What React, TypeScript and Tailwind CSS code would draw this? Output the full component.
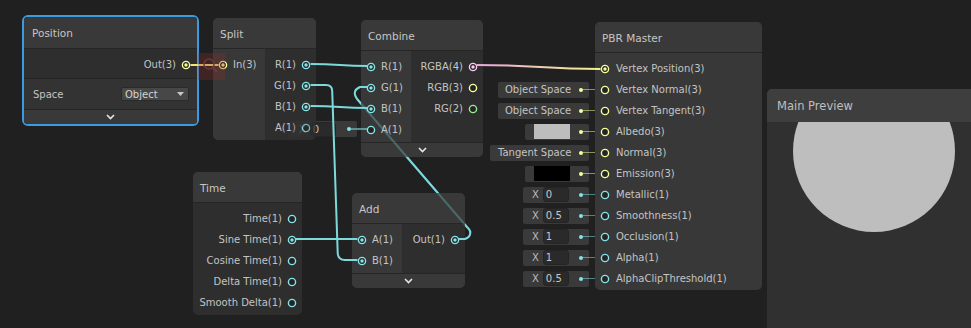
import React from "react";

const CY = "#84E4E7";
const YL = "#F6FF9A";
const PK = "#FBCBF4";
const GR = "#9AEF92";
const WIRE = "#7cdadd";

function Port({ color, on = false }: { color: string; on?: boolean }) {
  return (
    <svg width="10" height="10" viewBox="0 0 10 10" className="block shrink-0">
      <circle cx="5" cy="5" r="3.6" fill="#242424" stroke={color} strokeWidth="1.4" />
      {on && <circle cx="5" cy="5" r="1.7" fill={color} />}
    </svg>
  );
}

function InRow({ label, color, on, gap = "gap-[5px]" }: { label: string; color: string; on?: boolean; gap?: string }) {
  return (
    <div className={`flex h-[21px] items-center whitespace-nowrap pl-[5px] ${gap}`}>
      <Port color={color} on={on} />
      <span>{label}</span>
    </div>
  );
}

function OutRow({ label, color, on }: { label: string; color: string; on?: boolean }) {
  return (
    <div className="flex h-[21px] items-center justify-end gap-[5px] whitespace-nowrap pr-[5px]">
      <span>{label}</span>
      <Port color={color} on={on} />
    </div>
  );
}

function Chevron() {
  return (
    <div className="flex h-[15px] shrink-0 items-center justify-center border-t border-[#262626] bg-[#393939]">
      <svg width="9" height="6" viewBox="0 0 9 6">
        <polyline points="1,1 4.5,4.5 8,1" fill="none" stroke="#e6e6e6" strokeWidth="1.6" />
      </svg>
    </div>
  );
}

function Title({ children, pl = "px-[7px]", h = "h-[31px]" }: { children: React.ReactNode; pl?: string; h?: string }) {
  return (
    <div className={`flex shrink-0 items-center border-b border-[#262626] bg-[#393939] pt-[3px] text-[10.5px] text-[#c6c6c6] ${h} ${pl}`}>
      {children}
    </div>
  );
}

function Box({
  w,
  pl,
  dot,
  line,
  children,
}: {
  w: string;
  pl: string;
  dot: string;
  line: string;
  children: React.ReactNode;
}) {
  return (
    <div className="flex h-[21px] items-center justify-end">
      <div className={`flex h-[16px] items-center rounded-[2px] bg-[#3a3a3a] ${w} ${pl}`}>
        {children}
        <div className={`ml-auto size-[4px] shrink-0 rounded-full ${dot}`} />
        <div className={`h-[1.5px] w-[6px] shrink-0 ${line}`} />
      </div>
      <div className={`h-[1.5px] w-[11px] shrink-0 ${line}`} />
    </div>
  );
}

function XField({ v }: { v: string }) {
  return (
    <>
      <span className="text-[#bdbdbd]">X</span>
      <div className="ml-[4px] flex h-[15px] w-[26px] shrink-0 items-center rounded-[3px] border border-[#242424] bg-[#2a2a2a] pl-[2px] text-[#c8c8c8]">
        {v}
      </div>
    </>
  );
}

function InlineA({ faint = false }: { faint?: boolean }) {
  return (
    <div className={`absolute left-[290px] top-[121px] flex items-center ${faint ? "opacity-25" : ""}`}>
      <div className="flex h-[16px] w-[67px] items-center rounded-[2px] bg-[#3a3a3a] pl-[9px]">
        <span className="text-[#bdbdbd]">X</span>
        <div className="ml-[4px] flex h-[15px] w-[26px] shrink-0 items-center rounded-[3px] border border-[#242424] bg-[#2a2a2a] pl-[2px] text-[#c8c8c8]">
          0
        </div>
        <div className="ml-auto size-[4px] shrink-0 rounded-full bg-[#84E4E7]" />
        <div className="h-[1.5px] w-[6px] shrink-0 bg-[#84E4E7]/50" />
      </div>
      <div className="h-[1.5px] w-[10px] shrink-0 bg-[#84E4E7]/50" />
    </div>
  );
}

export default function App() {
  return (
    <div className="relative h-[328px] w-[971px] overflow-hidden bg-[#202020] font-['DejaVu_Sans','Liberation_Sans',sans-serif] text-[10px] text-[#c4c4c4]">
      {/* wire under nodes: diagonal part */}
      <svg className="absolute left-0 top-0" width="971" height="328">
        <path
          d="M458.5 239 L463 239 C470 239 473 232 467 227 L357.5 99.5 Q351 91 360 87 L367.5 87"
          fill="none"
          stroke={WIRE}
          strokeWidth="2"
        />
      </svg>

      {/* Position node */}
      <div className="absolute left-[22px] top-[15px] h-[111px] w-[177px] rounded-[6px] border-2 border-[#3a9be0]">
        <div className="flex h-full w-full flex-col overflow-hidden rounded-[4px] bg-[#2e2e2e]">
          <Title pl="px-[8px]" h="h-[32px]">
            Position
          </Title>
          <div className="flex h-[30px] shrink-0 flex-col border-b border-[#262626] bg-[#2e2e2e] pt-[5px]">
            <div className="flex h-[21px] items-center justify-end gap-[5px] pr-[6px]">
              <span>Out(3)</span>
              <Port color={YL} on />
            </div>
          </div>
          <div className="flex h-[30px] shrink-0 items-center justify-between bg-[#333333] pl-[9px] pr-[8px]">
            <span>Space</span>
            <div className="flex h-[14px] w-[68px] items-center justify-between rounded-[2px] border border-[#2a2a2a] bg-[#474747] pl-[3px] pr-[4px] text-[#d4d4d4]">
              <span>Object</span>
              <svg width="7" height="4" viewBox="0 0 7 4">
                <polygon points="0,0 7,0 3.5,4" fill="#c8c8c8" />
              </svg>
            </div>
          </div>
          <Chevron />
        </div>
      </div>

      {/* Combine node */}
      <div className="absolute left-[361px] top-[20px] flex w-[122px] flex-col overflow-hidden rounded-[5px] bg-[#2e2e2e]">
        <Title>Combine</Title>
        <div className="flex">
          <div className="w-[50px] shrink-0 bg-[#383838] pb-[2px] pt-[5px]">
            <InRow label="R(1)" color={CY} on />
            <InRow label="G(1)" color={CY} on />
            <InRow label="B(1)" color={CY} on />
            <InRow label="A(1)" color={CY} />
          </div>
          <div className="flex-1 pb-[2px] pt-[5px]">
            <OutRow label="RGBA(4)" color={PK} on />
            <OutRow label="RGB(3)" color={YL} />
            <OutRow label="RG(2)" color={GR} />
          </div>
        </div>
        <Chevron />
      </div>

      <InlineA />

      {/* Split node */}
      <div className="absolute left-[213px] top-[18px] flex w-[103px] flex-col overflow-hidden rounded-[5px] bg-[#2e2e2e]">
        <Title>Split</Title>
        <div className="flex">
          <div className="w-[52px] shrink-0 bg-[#383838] pb-[2px] pt-[5px]">
            <InRow label="In(3)" color={YL} on />
            <div className="h-[63px]" />
          </div>
          <div className="flex-1 pb-[2px] pt-[5px]">
            <OutRow label="R(1)" color={CY} on />
            <OutRow label="G(1)" color={CY} on />
            <OutRow label="B(1)" color={CY} on />
            <OutRow label="A(1)" color={CY} />
          </div>
        </div>
      </div>

      <InlineA faint />

      {/* Time node */}
      <div className="absolute left-[193px] top-[172px] flex w-[109px] flex-col overflow-hidden rounded-[5px] bg-[#2e2e2e]">
        <Title>Time</Title>
        <div className="pb-[2px] pt-[5px]">
          <OutRow label="Time(1)" color={CY} />
          <OutRow label="Sine Time(1)" color={CY} on />
          <OutRow label="Cosine Time(1)" color={CY} />
          <OutRow label="Delta Time(1)" color={CY} />
          <OutRow label="Smooth Delta(1)" color={CY} />
        </div>
      </div>

      {/* Add node */}
      <div className="absolute left-[352px] top-[193px] flex w-[113px] flex-col overflow-hidden rounded-[5px] bg-[#2e2e2e]">
        <Title>Add</Title>
        <div className="flex">
          <div className="w-[50px] shrink-0 bg-[#383838] pb-[2px] pt-[5px]">
            <InRow label="A(1)" color={CY} on />
            <InRow label="B(1)" color={CY} on />
          </div>
          <div className="flex-1 pb-[2px] pt-[5px]">
            <OutRow label="Out(1)" color={CY} on />
          </div>
        </div>
        <Chevron />
      </div>

      {/* PBR Master default value fields */}
      <div className="absolute left-[470px] top-[58px] flex w-[130px] flex-col">
        <div className="h-[21px]" />
        <Box w="w-[91px]" pl="pl-[7px]" dot="bg-[#F6FF9A]" line="bg-[#F6FF9A]/50">
          <span className="whitespace-nowrap text-[#c4c4c4]">Object Space</span>
        </Box>
        <Box w="w-[91px]" pl="pl-[7px]" dot="bg-[#F6FF9A]" line="bg-[#F6FF9A]/50">
          <span className="whitespace-nowrap text-[#c4c4c4]">Object Space</span>
        </Box>
        <Box w="w-[64px]" pl="pl-[9px]" dot="bg-[#F6FF9A]" line="bg-[#F6FF9A]/50">
          <div className="h-[15px] w-[36px] shrink-0 bg-[#bdbdbd]" />
        </Box>
        <Box w="w-[99px]" pl="pl-[8px]" dot="bg-[#F6FF9A]" line="bg-[#F6FF9A]/50">
          <span className="whitespace-nowrap text-[#c4c4c4]">Tangent Space</span>
        </Box>
        <Box w="w-[64px]" pl="pl-[9px]" dot="bg-[#F6FF9A]" line="bg-[#F6FF9A]/50">
          <div className="h-[15px] w-[36px] shrink-0 bg-black" />
        </Box>
        <Box w="w-[66px]" pl="pl-[9px]" dot="bg-[#84E4E7]" line="bg-[#84E4E7]/50">
          <XField v="0" />
        </Box>
        <Box w="w-[66px]" pl="pl-[9px]" dot="bg-[#84E4E7]" line="bg-[#84E4E7]/50">
          <XField v="0.5" />
        </Box>
        <Box w="w-[66px]" pl="pl-[9px]" dot="bg-[#84E4E7]" line="bg-[#84E4E7]/50">
          <XField v="1" />
        </Box>
        <Box w="w-[66px]" pl="pl-[9px]" dot="bg-[#84E4E7]" line="bg-[#84E4E7]/50">
          <XField v="1" />
        </Box>
        <Box w="w-[66px]" pl="pl-[9px]" dot="bg-[#84E4E7]" line="bg-[#84E4E7]/50">
          <XField v="0.5" />
        </Box>
      </div>

      {/* PBR Master node */}
      <div className="absolute left-[595px] top-[22px] flex w-[167px] flex-col overflow-hidden rounded-[5px] bg-[#383838]">
        <Title>PBR Master</Title>
        <div className="pb-[1px] pt-[5px]">
          <InRow gap="gap-[6px]" label="Vertex Position(3)" color={YL} on />
          <InRow gap="gap-[6px]" label="Vertex Normal(3)" color={YL} />
          <InRow gap="gap-[6px]" label="Vertex Tangent(3)" color={YL} />
          <InRow gap="gap-[6px]" label="Albedo(3)" color={YL} />
          <InRow gap="gap-[6px]" label="Normal(3)" color={YL} />
          <InRow gap="gap-[6px]" label="Emission(3)" color={YL} />
          <InRow gap="gap-[6px]" label="Metallic(1)" color={CY} />
          <InRow gap="gap-[6px]" label="Smoothness(1)" color={CY} />
          <InRow gap="gap-[6px]" label="Occlusion(1)" color={CY} />
          <InRow gap="gap-[6px]" label="Alpha(1)" color={CY} />
          <InRow gap="gap-[6px]" label="AlphaClipThreshold(1)" color={CY} />
        </div>
      </div>

      {/* wires over nodes */}
      <svg className="pointer-events-none absolute left-0 top-0" width="971" height="328">
        <defs>
          <linearGradient id="pk2yl" gradientUnits="userSpaceOnUse" x1="480" y1="0" x2="600" y2="0">
            <stop offset="0" stopColor="#eaa8dc" />
            <stop offset="1" stopColor="#f2f28c" />
          </linearGradient>
        </defs>
        <path d="M190.5 65 L218.5 65" stroke="#efe47a" strokeWidth="2" fill="none" />
        <path d="M310.5 64 C340 64 340 66 367.5 66" stroke={WIRE} strokeWidth="2" fill="none" />
        <path
          d="M310.5 85 L326 85 Q332 85 332.2 91 L337.7 253 Q338 260 345 260 L357.5 260"
          stroke={WIRE}
          strokeWidth="2"
          fill="none"
        />
        <path d="M310.5 106 C340 106 340 108 367.5 108" stroke={WIRE} strokeWidth="2" fill="none" />
        <path d="M295.5 239 L357.5 239" stroke={WIRE} strokeWidth="2" fill="none" />
        <path d="M476.5 65 C540 65 540 69 600.5 69" stroke="url(#pk2yl)" strokeWidth="2" fill="none" />
        <path
          d="M458.5 239 L463 239 C470 239 473 232 467 227 L357.5 99.5 Q351 91 360 87 L367.5 87"
          fill="none"
          stroke={WIRE}
          strokeWidth="2"
          opacity="0.3"
        />
        <path d="M458.5 239 L465.5 239" stroke={WIRE} strokeWidth="2" fill="none" />
        <path d="M360 87 L367.5 87" stroke={WIRE} strokeWidth="2" fill="none" />
      </svg>

      {/* hover highlight */}
      <div className="absolute left-[198px] top-[53px] h-[27px] w-[27px] bg-[#8a2c2c]/30">
        <svg width="27" height="27" viewBox="0 0 27 27" className="block">
          <circle cx="11" cy="11" r="5" fill="none" stroke="#6b3b3b" strokeWidth="1.5" />
          <line x1="14.5" y1="14.5" x2="19" y2="19" stroke="#6b3b3b" strokeWidth="2" />
        </svg>
      </div>

      {/* Main Preview */}
      <div className="absolute left-[767px] top-[89px] flex h-[239px] w-[210px] flex-col overflow-hidden rounded-tl-[5px] bg-[#303030]">
        <div className="flex h-[33px] shrink-0 items-center bg-[#3e3e3e] pl-[10px] pt-[2px] text-[11.5px] text-[#bfbfbf]">
          Main Preview
        </div>
        <div className="relative flex-1 overflow-hidden">
          <svg className="absolute left-0 top-0" width="210" height="206">
            <circle cx="107" cy="29" r="81" fill="#bebebe" />
          </svg>
        </div>
      </div>
    </div>
  );
}
